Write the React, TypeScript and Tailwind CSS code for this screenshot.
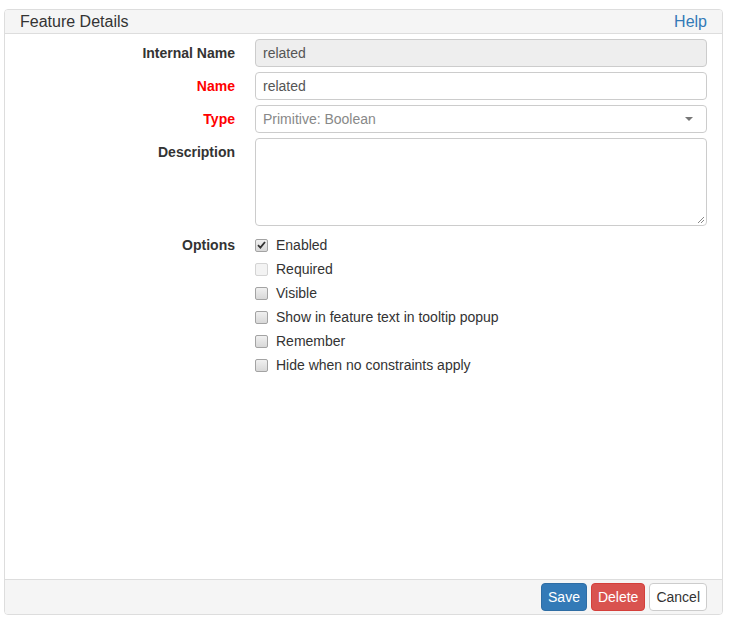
import React from 'react'

const options = [
  { label: 'Enabled', checked: true },
  { label: 'Required', disabled: true },
  { label: 'Visible' },
  { label: 'Show in feature text in tooltip popup' },
  { label: 'Remember' },
  { label: 'Hide when no constraints apply' },
]

function Label({ children, required }: { children: React.ReactNode; required?: boolean }) {
  return (
    <div
      className={`text-right font-bold text-[14px] leading-[20px] pt-[4px] ${
        required ? 'text-[#ff0000]' : 'text-[#333]'
      }`}
    >
      {children}
    </div>
  )
}

function Checkbox({ checked, disabled }: { checked?: boolean; disabled?: boolean }) {
  return (
    <span
      className={`w-[13px] h-[13px] flex items-center justify-center rounded-[2px] border ${
        disabled
          ? 'border-[#d4d4d4] bg-[#f3f3f3]'
          : 'border-[#a3a3a3] bg-gradient-to-b from-[#f0f0f0] to-[#d8d8d8]'
      }`}
    >
      {checked && (
        <svg width="9" height="8" viewBox="0 0 9 8">
          <path d="M1 4.2 L3.4 6.6 L8 1" stroke="#333" strokeWidth="1.8" fill="none" />
        </svg>
      )}
    </span>
  )
}

export default function App() {
  return (
    <div
      className="bg-white min-h-screen pt-[9px] pl-[4px] pr-[6px]"
      style={{ fontFamily: '"Liberation Sans", Arial, sans-serif' }}
    >
      <div className="h-[606px] flex flex-col border border-[#ddd] rounded-[4px] overflow-hidden">
        {/* Header */}
        <div className="h-[24px] flex items-center justify-between px-[15px] bg-[#f5f5f5] border-b border-[#ddd]">
          <span className="text-[16px] text-[#333]">Feature Details</span>
          <span className="text-[16px] text-[#337ab7]">Help</span>
        </div>

        {/* Body */}
        <div className="flex-1 pt-[5px] pr-[15px]">
          <div className="grid grid-cols-[230px_1fr] gap-x-[20px] gap-y-[5px]">
            <Label>Internal Name</Label>
            <div className="h-[28px] flex items-center px-[7px] bg-[#eee] border border-[#ccc] rounded-[4px] text-[14px] text-[#555]">
              related
            </div>

            <Label required>Name</Label>
            <div className="h-[28px] flex items-center px-[7px] bg-white border border-[#ccc] rounded-[4px] text-[14px] text-[#555]">
              related
            </div>

            <Label required>Type</Label>
            <div className="h-[28px] flex items-center justify-between pl-[7px] pr-[13px] bg-white border border-[#ccc] rounded-[4px] text-[14px] text-[#888]">
              <span>Primitive: Boolean</span>
              <svg width="8" height="4" viewBox="0 0 8 4">
                <path d="M0 0 L8 0 L4 4 Z" fill="#777" />
              </svg>
            </div>

            <Label>Description</Label>
            <div className="relative h-[88px] bg-white border border-[#ccc] rounded-[4px]">
              <svg className="absolute right-[1px] bottom-[1px]" width="8" height="8" viewBox="0 0 8 8">
                <path d="M7 1 L1 7 M7 4 L4 7" stroke="#888" strokeWidth="1" />
              </svg>
            </div>

            <div className="text-right font-bold text-[14px] leading-[24px] text-[#333] mt-[2px]">Options</div>
            <div className="flex flex-col mt-[2px]">
              {options.map((o) => (
                <div key={o.label} className="h-[24px] flex items-center gap-[8px] text-[14px] text-[#333]">
                  <Checkbox checked={o.checked} disabled={o.disabled} />
                  <span>{o.label}</span>
                </div>
              ))}
            </div>
          </div>
        </div>

        {/* Footer */}
        <div className="flex justify-end items-center gap-[4px] py-[3px] pr-[15px] bg-[#f5f5f5] border-t border-[#ddd]">
          <button className="h-[28px] px-[6px] rounded-[4px] text-[14px] text-white bg-[#337ab7] border border-[#2e6da4]">
            Save
          </button>
          <button className="h-[28px] px-[6px] rounded-[4px] text-[14px] text-white bg-[#d9534f] border border-[#d43f3a]">
            Delete
          </button>
          <button className="h-[28px] px-[6px] rounded-[4px] text-[14px] text-[#333] bg-white border border-[#ccc]">
            Cancel
          </button>
        </div>
      </div>
    </div>
  )
}
